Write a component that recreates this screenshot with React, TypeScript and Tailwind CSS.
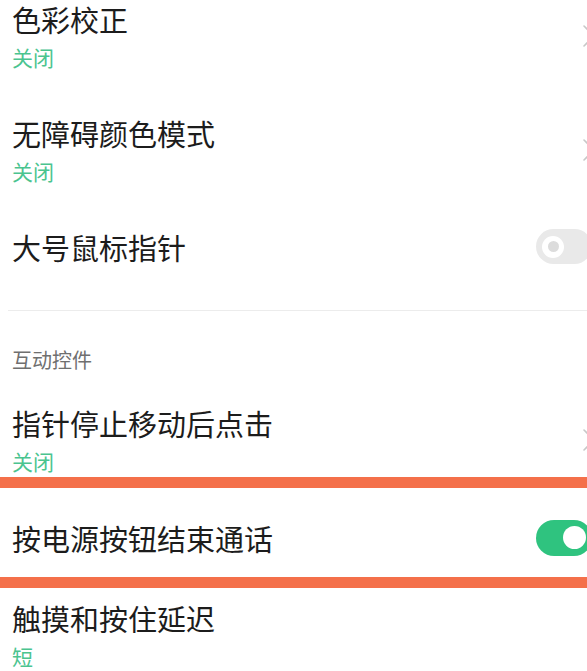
import React from "react";

const font = { fontFamily: '"Noto Sans CJK SC", "Noto Sans", sans-serif' };

function Chevron() {
  return (
    <svg width="12" height="22" viewBox="0 0 12 22" className="shrink-0 mr-[5px]">
      <path d="M1 1 L11 11 L1 21" fill="none" stroke="#c8c8c8" strokeWidth="1.6" strokeLinecap="round" strokeLinejoin="round" />
    </svg>
  );
}

function Toggle({ on }: { on: boolean }) {
  if (on) {
    return (
      <div className="shrink-0 mr-[8px] w-[56px] h-[36px] rounded-full bg-[#2fc37f] flex items-center justify-end pr-[6px]">
        <div className="w-[23px] h-[23px] rounded-full bg-white" />
      </div>
    );
  }
  return (
    <div className="shrink-0 mr-[8px] w-[56px] h-[35px] rounded-full bg-[#e9e9e9] flex items-center pl-[6px]">
      <div className="w-[22px] h-[22px] rounded-full bg-white flex items-center justify-center">
        <div className="w-[11px] h-[11px] rounded-full bg-[#dcdcdc]" />
      </div>
    </div>
  );
}

function Title({ children }: { children: React.ReactNode }) {
  return <div className="text-[29px] leading-[36px] text-[#1c1c1c]">{children}</div>;
}

function Sub({ children, className = "" }: { children: React.ReactNode; className?: string }) {
  return <div className={"text-[21px] leading-[28px] text-[#4bc48f] " + className}>{children}</div>;
}

export default function App() {
  return (
    <div className="w-[587px] h-[671px] overflow-hidden bg-white" style={font}>
      <div className="w-[600px]">
        {/* 色彩校正 */}
        <div className="flex items-center pl-[12px] pt-[1px]">
          <div className="flex-1">
            <Title>色彩校正</Title>
            <Sub className="mt-[6px]">关闭</Sub>
          </div>
          <Chevron />
        </div>

        {/* 无障碍颜色模式 */}
        <div className="flex items-center pl-[12px] mt-[44px]">
          <div className="flex-1">
            <Title>无障碍颜色模式</Title>
            <Sub className="mt-[6px]">关闭</Sub>
          </div>
          <Chevron />
        </div>

        {/* 大号鼠标指针 */}
        <div className="flex items-center pl-[12px] h-[125px] pb-[2px]">
          <div className="flex-1">
            <Title>大号鼠标指针</Title>
          </div>
          <Toggle on={false} />
        </div>

        <div className="ml-[8px] h-px bg-[#ececec]" />

        <div className="pl-[12px] mt-[35px] text-[20px] leading-[28px] text-[#6f6f6f]">互动控件</div>

        {/* 指针停止移动后点击 */}
        <div className="flex items-center pl-[12px] mt-[31px]">
          <div className="flex-1">
            <Title>指针停止移动后点击</Title>
            <Sub className="mt-[6px]">关闭</Sub>
          </div>
          <Chevron />
        </div>

        <div className="mt-[2px] h-[11px] bg-[#f4704a]" />

        {/* 按电源按钮结束通话 */}
        <div className="flex items-center pl-[12px] h-[89px] pt-[10px]">
          <div className="flex-1">
            <Title>按电源按钮结束通话</Title>
          </div>
          <Toggle on={true} />
        </div>

        <div className="h-[11px] bg-[#f4704a]" />

        {/* 触摸和按住延迟 */}
        <div className="pl-[12px] mt-[12px]">
          <Title>触摸和按住延迟</Title>
          <Sub className="mt-[6px]">短</Sub>
        </div>
      </div>
    </div>
  );
}
